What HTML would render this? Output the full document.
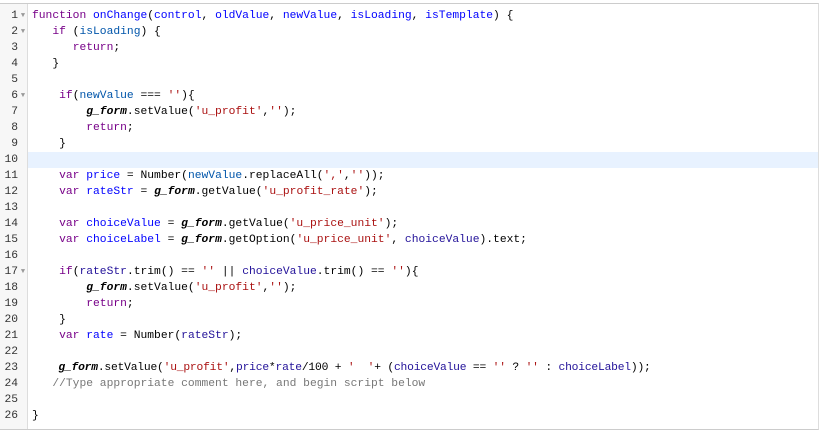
<!DOCTYPE html>
<html><head><style>
html,body{margin:0;padding:0;background:#fff;width:819px;height:433px;overflow:hidden}
.ed{position:absolute;left:0;top:3px;width:818px;height:425px;border-top:1px solid #ccc;border-bottom:1px solid #ccc;border-right:1px solid #ddd;background:#fff}
.gut{position:absolute;left:0;top:0;width:27px;height:100%;background:#f7f7f7;border-right:1px solid #ddd}
.hl{position:absolute;left:28px;right:0;top:148px;height:16px;background:#e8f2ff}
.lines{position:absolute;left:0;top:4px;font-family:"Liberation Mono",monospace;font-size:11.3px;line-height:16px;color:#000;white-space:pre}
.ln{display:inline-block;width:14px;text-align:right;color:#333;margin-left:4px}
.fd{display:inline-block;width:10px;color:#999;font-size:7px;text-align:center;vertical-align:top}
.c{display:inline-block;margin-left:4px}
.k{color:#708}.v{color:#05a}.d{color:#00f}.s{color:#a11}.m{color:#777}.g{font-weight:bold;font-style:italic}.n{color:#219}
</style></head><body>
<div class="ed"><div class="gut"></div><div class="hl"></div>
<div class="lines"><div><span class="ln">1</span><span class="fd">▼</span><span class="c"><span class="k">function</span> <span class="d">onChange</span>(<span class="d">control</span>, <span class="d">oldValue</span>, <span class="d">newValue</span>, <span class="d">isLoading</span>, <span class="d">isTemplate</span>) {</span></div><div><span class="ln">2</span><span class="fd">▼</span><span class="c">   <span class="k">if</span> (<span class="v">isLoading</span>) {</span></div><div><span class="ln">3</span><span class="fd"></span><span class="c">      <span class="k">return</span>;</span></div><div><span class="ln">4</span><span class="fd"></span><span class="c">   }</span></div><div><span class="ln">5</span><span class="fd"></span><span class="c"> </span></div><div><span class="ln">6</span><span class="fd">▼</span><span class="c">    <span class="k">if</span>(<span class="v">newValue</span> === <span class="s">''</span>){</span></div><div><span class="ln">7</span><span class="fd"></span><span class="c">        <span class="g">g_form</span>.setValue(<span class="s">'u_profit'</span>,<span class="s">''</span>);</span></div><div><span class="ln">8</span><span class="fd"></span><span class="c">        <span class="k">return</span>;</span></div><div><span class="ln">9</span><span class="fd"></span><span class="c">    }</span></div><div><span class="ln">10</span><span class="fd"></span><span class="c"> </span></div><div><span class="ln">11</span><span class="fd"></span><span class="c">    <span class="k">var</span> <span class="d">price</span> = Number(<span class="v">newValue</span>.replaceAll(<span class="s">','</span>,<span class="s">''</span>));</span></div><div><span class="ln">12</span><span class="fd"></span><span class="c">    <span class="k">var</span> <span class="d">rateStr</span> = <span class="g">g_form</span>.getValue(<span class="s">'u_profit_rate'</span>);</span></div><div><span class="ln">13</span><span class="fd"></span><span class="c"> </span></div><div><span class="ln">14</span><span class="fd"></span><span class="c">    <span class="k">var</span> <span class="d">choiceValue</span> = <span class="g">g_form</span>.getValue(<span class="s">'u_price_unit'</span>);</span></div><div><span class="ln">15</span><span class="fd"></span><span class="c">    <span class="k">var</span> <span class="d">choiceLabel</span> = <span class="g">g_form</span>.getOption(<span class="s">'u_price_unit'</span>, <span class="n">choiceValue</span>).text;</span></div><div><span class="ln">16</span><span class="fd"></span><span class="c"> </span></div><div><span class="ln">17</span><span class="fd">▼</span><span class="c">    <span class="k">if</span>(<span class="n">rateStr</span>.trim() == <span class="s">''</span> || <span class="n">choiceValue</span>.trim() == <span class="s">''</span>){</span></div><div><span class="ln">18</span><span class="fd"></span><span class="c">        <span class="g">g_form</span>.setValue(<span class="s">'u_profit'</span>,<span class="s">''</span>);</span></div><div><span class="ln">19</span><span class="fd"></span><span class="c">        <span class="k">return</span>;</span></div><div><span class="ln">20</span><span class="fd"></span><span class="c">    }</span></div><div><span class="ln">21</span><span class="fd"></span><span class="c">    <span class="k">var</span> <span class="d">rate</span> = Number(<span class="n">rateStr</span>);</span></div><div><span class="ln">22</span><span class="fd"></span><span class="c"> </span></div><div><span class="ln">23</span><span class="fd"></span><span class="c" style="letter-spacing:-0.2px">    <span class="g">g_form</span>.setValue(<span class="s">'u_profit'</span>,<span class="n">price</span>*<span class="n">rate</span>/100 + <span class="s">'  '</span>+ (<span class="n">choiceValue</span> == <span class="s">''</span> ? <span class="s">''</span> : <span class="n">choiceLabel</span>));</span></div><div><span class="ln">24</span><span class="fd"></span><span class="c">   <span class="m">//Type appropriate comment here, and begin script below</span></span></div><div><span class="ln">25</span><span class="fd"></span><span class="c"> </span></div><div><span class="ln">26</span><span class="fd"></span><span class="c">}</span></div></div>
</div>
</body></html>
